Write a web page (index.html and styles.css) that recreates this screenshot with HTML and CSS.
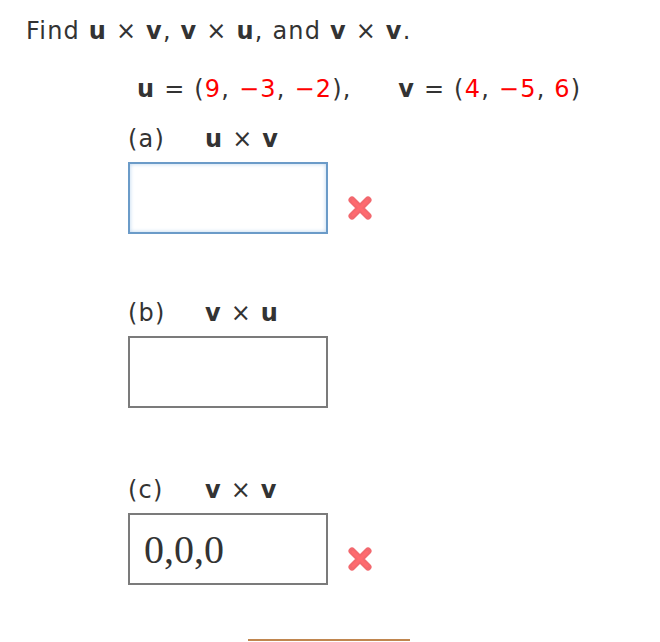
FILE: index.html
```html
<!DOCTYPE html>
<html lang="en">
<head>
    <meta charset="UTF-8">
    <title>Cross products</title>
    <link rel="stylesheet" href="styles.css">
</head>
<body>

<div class="question">
    <p class="intro">Find <b>u</b> × <b>v</b>, <b>v</b> × <b>u</b>, and <b>v</b> × <b>v</b>.</p>

    <p class="given">
        <b>u</b> = (<span class="num">9</span>, <span class="num">−3</span>, <span class="num">−2</span>),
        <span class="sep"></span>
        <b>v</b> = (<span class="num">4</span>, <span class="num">−5</span>, <span class="num">6</span>)
    </p>

    <div class="part">
        <div class="part-label"><span class="letter">(a)</span><span><b>u</b> × <b>v</b></span></div>
        <div class="answer-row">
            <input class="answer focused" type="text" value="">
            <svg class="mark" width="28" height="28" viewBox="0 0 28 28">
                <path d="M6 6 L22 22 M22 6 L6 22" stroke="#f0434b" stroke-width="7" stroke-linecap="round" opacity="0.8"/>
                <path d="M7 7 L21 21 M21 7 L7 21" stroke="#ff6a6f" stroke-width="3" stroke-linecap="round"/>
            </svg>
        </div>
    </div>

    <div class="part">
        <div class="part-label"><span class="letter">(b)</span><span><b>v</b> × <b>u</b></span></div>
        <div class="answer-row">
            <input class="answer" type="text" value="">
        </div>
    </div>

    <div class="part">
        <div class="part-label"><span class="letter">(c)</span><span><b>v</b> × <b>v</b></span></div>
        <div class="answer-row">
            <input class="answer" type="text" value="0,0,0">
            <svg class="mark" width="28" height="28" viewBox="0 0 28 28">
                <path d="M6 6 L22 22 M22 6 L6 22" stroke="#f0434b" stroke-width="7" stroke-linecap="round" opacity="0.8"/>
                <path d="M7 7 L21 21 M21 7 L7 21" stroke="#ff6a6f" stroke-width="3" stroke-linecap="round"/>
            </svg>
        </div>
    </div>

    <div class="footer-rule"></div>
</div>

</body>
</html>
```

FILE: styles.css
```css
body {
    margin: 0;
    background: #fff;
    color: #333;
    font-family: "DejaVu Sans", Verdana, sans-serif;
    font-size: 24px;
    letter-spacing: 1.2px;
}
.question {
    padding: 10px 0 0 26px;
}
p {
    margin: 0;
    line-height: 28px;
}
.intro {
    margin-top: 7px;
}
.given {
    margin: 30px 0 0 111px;
    white-space: nowrap;
}
.given .sep {
    display: inline-block;
    width: 29px;
}
.num {
    color: #f00;
}
.part {
    margin-left: 102px;
}
.part-label {
    display: flex;
    line-height: 28px;
    margin-top: 22px;
}
.part-label .letter {
    width: 77px;
}
.answer-row {
    display: flex;
    align-items: flex-end;
    margin-top: 9px;
}
.answer {
    box-sizing: border-box;
    width: 200px;
    height: 72px;
    margin: 0;
    border: 2px solid #7b7b7b;
    padding: 0 14px;
    font-family: "Liberation Serif", "Times New Roman", serif;
    font-size: 40px;
    letter-spacing: 0;
    color: #333;
    outline: none;
}
.answer.focused {
    border-color: #6b9bc8;
    box-shadow: inset 0 0 4px #b9d4ee;
}
.mark {
    margin: 0 0 12px 18px;
}
.part + .part {
    margin-top: 65px;
}
.part + .part + .part {
    margin-top: 68px;
}
.footer-rule {
    width: 162px;
    height: 2px;
    margin: 54px 0 0 222px;
    background: #c0864f;
}
```
